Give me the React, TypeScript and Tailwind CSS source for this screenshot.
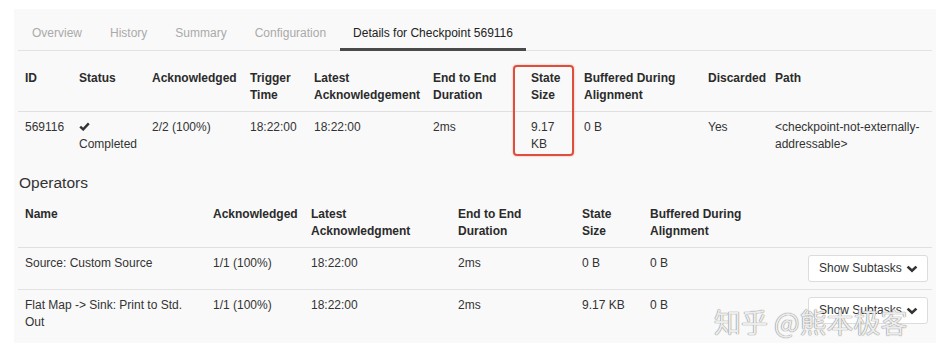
const FONT = { fontFamily: '"Liberation Sans", Arial, sans-serif' }

type Col = { w: number; cls: string }

const mainCols: Col[] = [
  { w: 54, cls: 'pl-[7px] pr-[3px]' },
  { w: 73, cls: 'pl-[7px] pr-[3px]' },
  { w: 98, cls: 'pl-[7px] pr-[2px]' },
  { w: 64, cls: 'pl-[7px] pr-[3px]' },
  { w: 119, cls: 'pl-[7px] pr-[2px]' },
  { w: 98, cls: 'pl-[7px] pr-[3px]' },
  { w: 53, cls: 'pl-[7px] pr-[8px]' },
  { w: 124, cls: 'pl-[7px] pr-[3px]' },
  { w: 67, cls: 'pl-[7px] pr-0' },
  { w: 164, cls: 'pl-[7px] pr-[3px]' },
]

const opCols: Col[] = [
  { w: 188, cls: 'pl-[7px] pr-[14px]' },
  { w: 98, cls: 'pl-[7px] pr-[3px]' },
  { w: 147, cls: 'pl-[7px] pr-[3px]' },
  { w: 124, cls: 'pl-[7px] pr-[3px]' },
  { w: 68, cls: 'pl-[7px] pr-[12px]' },
  { w: 158, cls: 'pl-[7px] pr-[3px]' },
  { w: 131, cls: 'pl-[7px] pr-[4px]' },
]

const tabs = ['Overview', 'History', 'Summary', 'Configuration', 'Details for Checkpoint 569116']

function Check() {
  return (
    <svg width="11" height="9" viewBox="0 0 11 9" className="inline-block align-baseline">
      <path d="M1.2 4.6 L4.2 7.4 L9.8 1.4" stroke="#333" strokeWidth="2.4" fill="none" />
    </svg>
  )
}

function Chevron() {
  return (
    <svg width="12" height="8" viewBox="0 0 12 8" className="inline-block">
      <path d="M1.6 1.6 L6 5.8 L10.4 1.6" stroke="#333" strokeWidth="2.6" fill="none" />
    </svg>
  )
}

function SubtasksButton() {
  return (
    <button
      type="button"
      className="inline-flex h-[27px] w-[120px] items-center rounded-[3px] border border-[#dcdcdc] bg-white pl-[10px] text-[12px] leading-[17px] text-[#333]"
    >
      Show Subtasks
      <span className="ml-[4px] mt-[1px]">
        <Chevron />
      </span>
    </button>
  )
}

const opRows = [
  { name: 'Source: Custom Source', ack: '1/1 (100%)', latest: '18:22:00', dur: '2ms', size: '0 B', buf: '0 B' },
  { name: 'Flat Map -> Sink: Print to Std. Out', ack: '1/1 (100%)', latest: '18:22:00', dur: '2ms', size: '9.17 KB', buf: '0 B' },
]

export default function App() {
  return (
    <div className="relative h-[363px] w-[941px] overflow-hidden bg-white text-[12px] leading-[17px] text-[#333]" style={FONT}>
      <div className="ml-[14px] mt-[9px] w-[922px] bg-[#f9f9f9] px-[4px] pb-[5px] pt-[8px]">
        {/* tabs */}
        <div className="flex border-b border-[#e3e3e3]">
          {tabs.map((t, i) => {
            const active = i === tabs.length - 1
            return (
              <div
                key={t}
                className={
                  active
                    ? '-mb-px border-b-[3px] border-[#4a4a4a] px-[13px] pb-[6px] pt-[8px] text-[#222]'
                    : '-mb-px border-b-[3px] border-transparent px-[14px] pb-[6px] pt-[8px] text-[#aaa]'
                }
              >
                {t}
              </div>
            )
          })}
        </div>

        {/* checkpoint table */}
        <div className="relative mt-[11px]">
          <table className="w-[914px] table-fixed border-collapse">
            <colgroup>
              {mainCols.map((c, i) => (
                <col key={i} style={{ width: c.w }} />
              ))}
            </colgroup>
            <thead>
              <tr className="border-b border-[#e0e0e0] text-left align-top font-bold text-[#2b2b2b]">
                {['ID', 'Status', 'Acknowledged', 'Trigger Time', 'Latest Acknowledgement', 'End to End Duration', 'State Size', 'Buffered During Alignment', 'Discarded', 'Path'].map(
                  (h, i) => (
                    <th key={h} className={`${mainCols[i].cls} pb-[7px] pt-[8px] font-bold`}>
                      {h}
                    </th>
                  ),
                )}
              </tr>
            </thead>
            <tbody>
              <tr className="align-top">
                <td className={`${mainCols[0].cls} py-[7px]`}>569116</td>
                <td className={`${mainCols[1].cls} py-[7px]`}>
                  <Check /> Completed
                </td>
                <td className={`${mainCols[2].cls} py-[7px]`}>2/2 (100%)</td>
                <td className={`${mainCols[3].cls} py-[7px]`}>18:22:00</td>
                <td className={`${mainCols[4].cls} py-[7px]`}>18:22:00</td>
                <td className={`${mainCols[5].cls} py-[7px]`}>2ms</td>
                <td className={`${mainCols[6].cls} py-[7px]`}>9.17 KB</td>
                <td className={`${mainCols[7].cls} py-[7px]`}>0 B</td>
                <td className={`${mainCols[8].cls} py-[7px]`}>Yes</td>
                <td className={`${mainCols[9].cls} py-[7px]`}>&lt;checkpoint-not-externally-addressable&gt;</td>
              </tr>
            </tbody>
          </table>
          {/* highlight box */}
          <div className="absolute left-[495px] top-[3px] h-[91px] w-[61px] rounded-[4px] border-[2.5px] border-[#dd4f3c] shadow-[0_0_2px_rgba(221,79,60,0.5)]" />
        </div>

        {/* operators */}
        <h3 className="ml-px mt-[13px] text-[15.5px] font-normal leading-[20px] text-[#333]">Operators</h3>
        <table className="mt-[5px] w-[914px] table-fixed border-collapse">
          <colgroup>
            {opCols.map((c, i) => (
              <col key={i} style={{ width: c.w }} />
            ))}
          </colgroup>
          <thead>
            <tr className="border-b border-[#e0e0e0] text-left align-top text-[#2b2b2b]">
              {['Name', 'Acknowledged', 'Latest Acknowledgment', 'End to End Duration', 'State Size', 'Buffered During Alignment', ''].map((h, i) => (
                <th key={i} className={`${opCols[i].cls} pb-[7px] pt-[8px] font-bold`}>
                  {h}
                </th>
              ))}
            </tr>
          </thead>
          <tbody>
            {opRows.map((r, idx) => (
              <tr key={r.name} className={idx > 0 ? 'border-t border-[#e3e3e3] align-top' : 'align-top'}>
                <td className={`${opCols[0].cls} py-[7px]`}>{r.name}</td>
                <td className={`${opCols[1].cls} py-[7px]`}>{r.ack}</td>
                <td className={`${opCols[2].cls} py-[7px]`}>{r.latest}</td>
                <td className={`${opCols[3].cls} py-[7px]`}>{r.dur}</td>
                <td className={`${opCols[4].cls} py-[7px]`}>{r.size}</td>
                <td className={`${opCols[5].cls} py-[7px]`}>{r.buf}</td>
                <td className={`${opCols[6].cls} py-[7px] text-right`}>
                  <SubtasksButton />
                </td>
              </tr>
            ))}
          </tbody>
        </table>
      </div>

      {/* watermark */}
      <div
        className="absolute left-[714px] top-[305px] whitespace-nowrap text-[27px] leading-[34px] text-[#ececec] [text-shadow:0_0_1px_#777,0_0_1px_#999]"
        style={{ fontFamily: '"Noto Sans CJK SC", "Liberation Sans", sans-serif' }}
      >
        知乎 @熊本极客
      </div>
    </div>
  )
}
